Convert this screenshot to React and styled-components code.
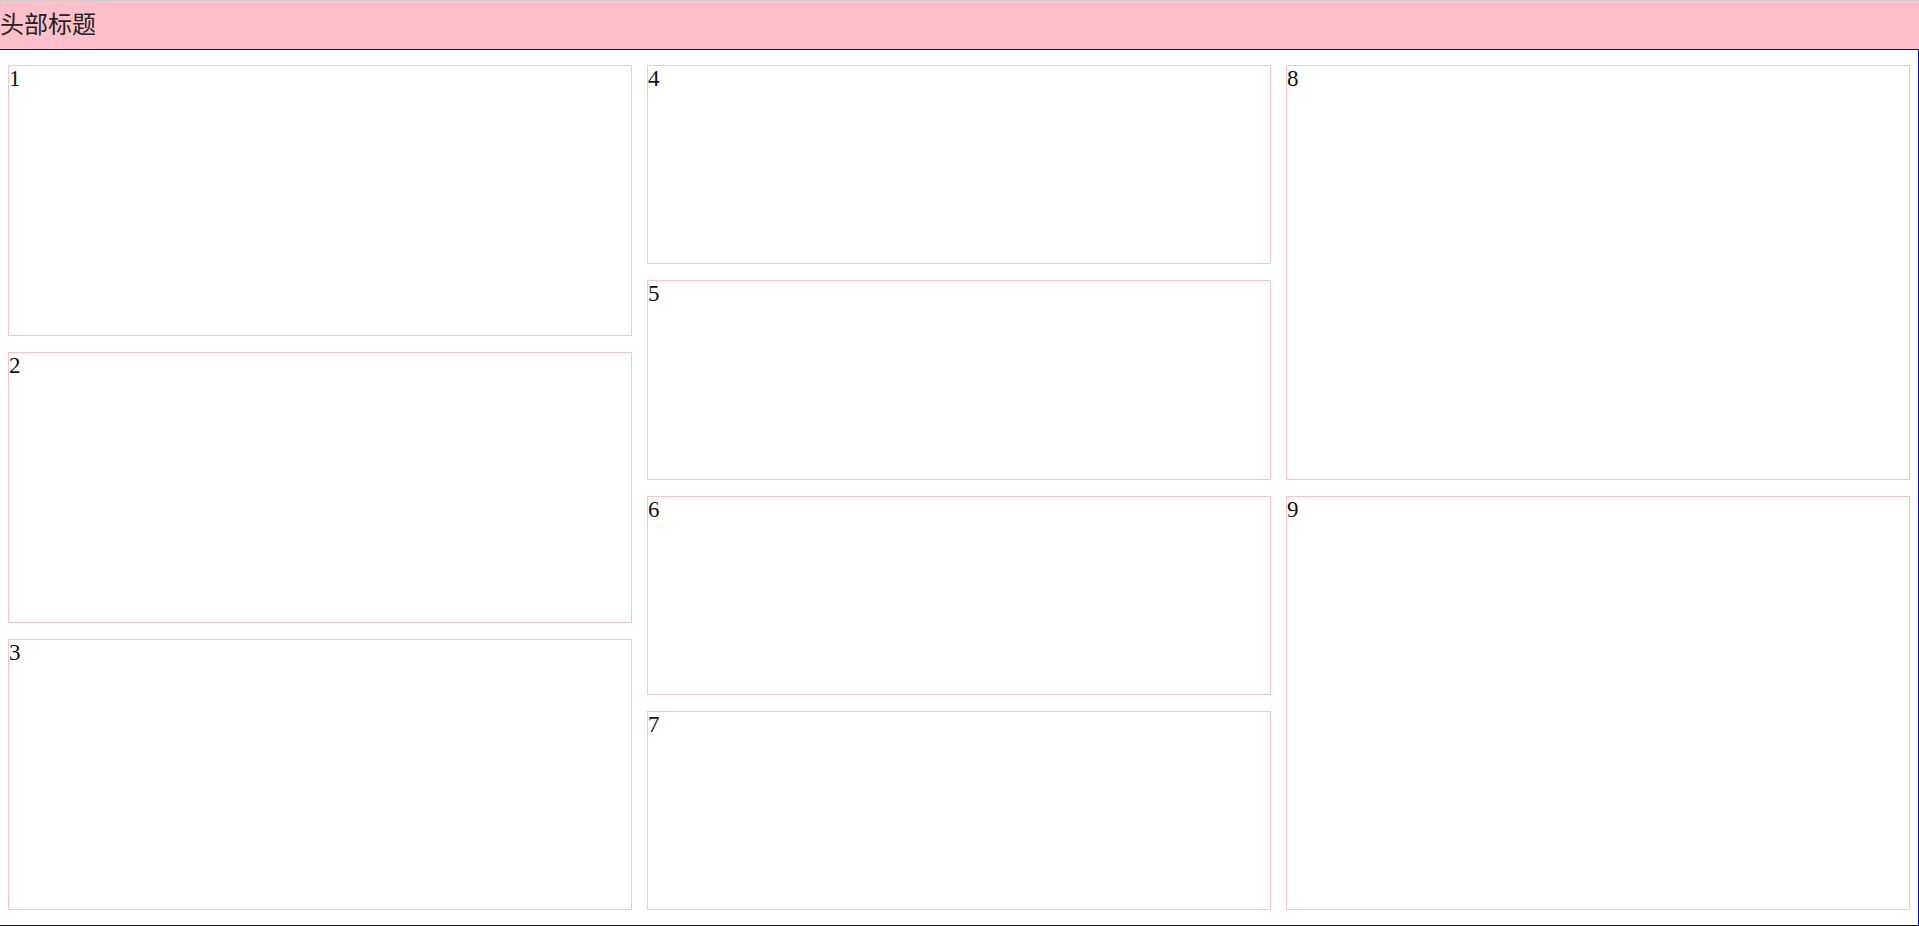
import styled, { createGlobalStyle } from "styled-components";

const GlobalStyle = createGlobalStyle`
  html, body {
    margin: 0;
    padding: 0;
    background: #fff;
  }
  body {
    font-family: "Liberation Serif", "Noto Sans CJK SC", serif;
    color: #111;
  }
`;

const Page = styled.div`
  display: flex;
  flex-direction: column;
  height: 100vh;
  overflow: hidden;
`;

const Header = styled.header`
  box-sizing: border-box;
  height: 50px;
  padding-top: 3px;
  border-top: 1px solid #cfcfcf;
  border-bottom: 1px solid #0000ff;
  background: #ffc0cb;
  font-size: 24px;
  line-height: 43px;
  color: #222;
`;

const Main = styled.main`
  flex: 1;
  box-sizing: border-box;
  display: grid;
  grid-template-columns: repeat(3, 1fr);
  column-gap: 15px;
  padding: 15px 8px 15px 8px;
  border-right: 1px solid #0000ff;
  border-bottom: 1px solid #151515;
`;

const Column = styled.div`
  display: flex;
  flex-direction: column;
  gap: 16px;
  min-height: 0;
`;

const Card = styled.div`
  flex: 1;
  box-sizing: border-box;
  border: 1px solid #ffc0cb;
  font-size: 23px;
  color: #111;
`;

const columns = [
  [1, 2, 3],
  [4, 5, 6, 7],
  [8, 9],
];

export default function App() {
  return (
    <>
      <GlobalStyle />
      <Page>
        <Header>头部标题</Header>
        <Main>
          {columns.map((col, i) => (
            <Column key={i}>
              {col.map((n) => (
                <Card key={n}>{n}</Card>
              ))}
            </Column>
          ))}
        </Main>
      </Page>
    </>
  );
}
